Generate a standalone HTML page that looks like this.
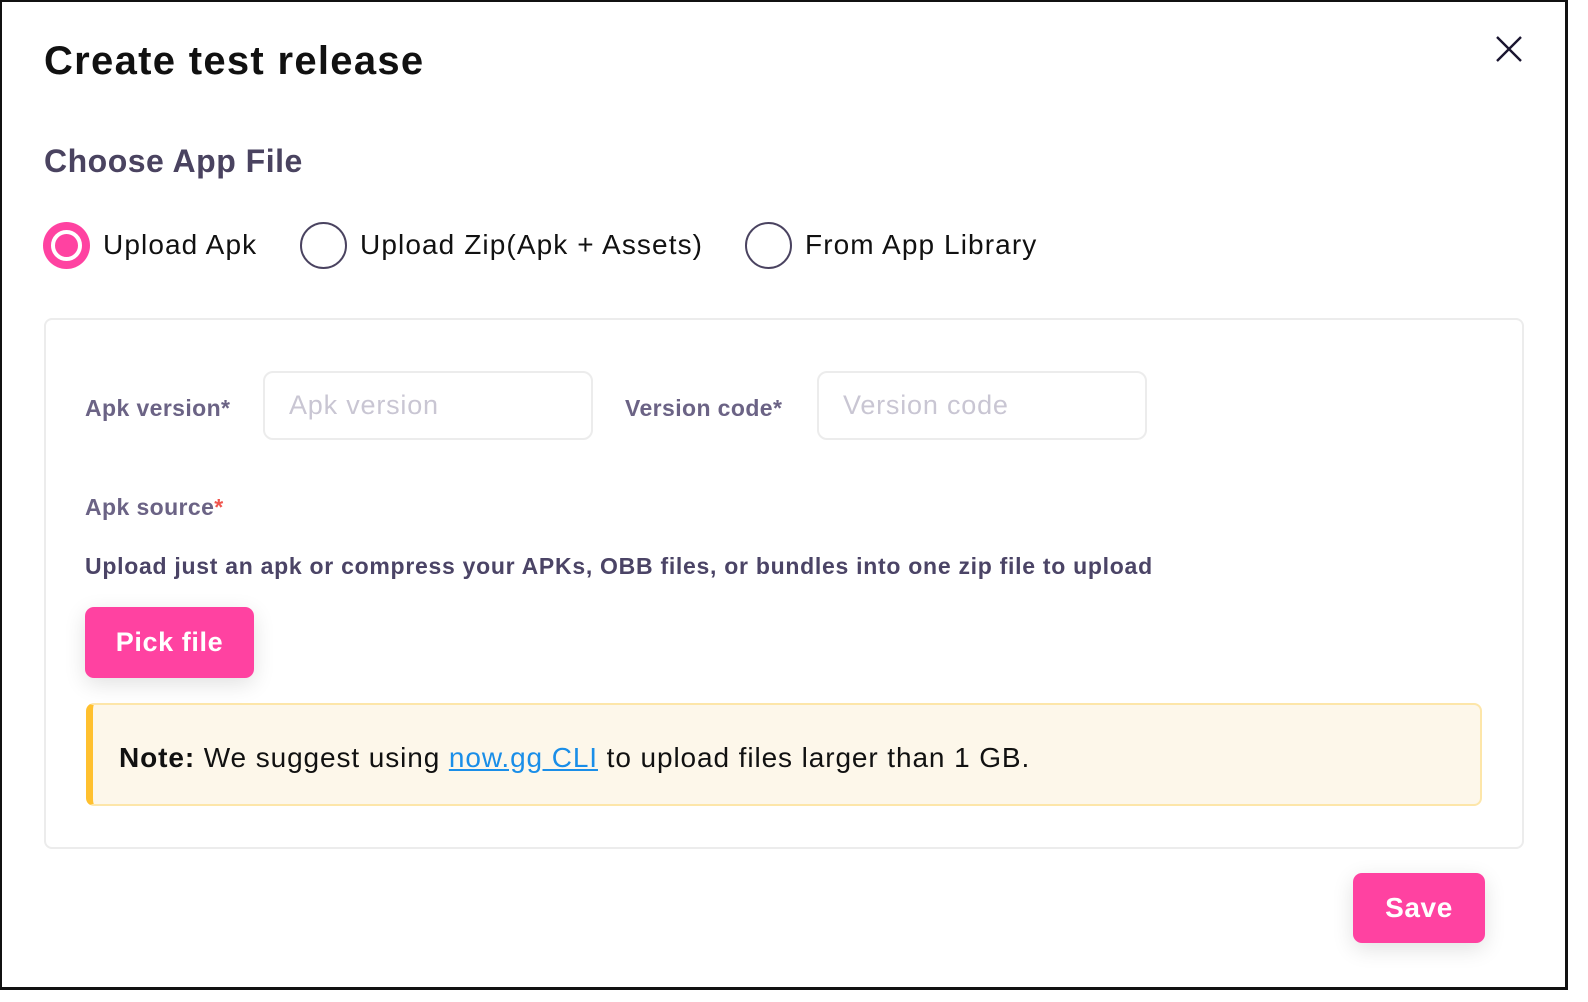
<!DOCTYPE html>
<html><head><meta charset="utf-8"><style>
*{box-sizing:border-box;margin:0;padding:0}
body{width:1588px;height:1002px;background:#fff;font-family:"Liberation Sans",sans-serif;position:relative;overflow:hidden}
.frame{position:absolute;left:0;top:0;width:1568px;height:990px;border:2px solid #111;border-right-width:3px;border-bottom-width:3px}
.a{position:absolute;white-space:nowrap}
.radio{position:absolute;width:47px;height:47px;border-radius:50%;border:2px solid #4a4360}
.radio.on{border:0;background:#ff42a1}
.radio.on::after{content:"";position:absolute;left:8px;top:8px;width:31px;height:31px;border-radius:50%;border:4px solid #fff;box-sizing:border-box}
.rl{font-size:28px;color:#111;top:229px;letter-spacing:1.1px}
.card{position:absolute;left:44px;top:318px;width:1480px;height:531px;border:2px solid #ececec;border-radius:8px}
.lbl{font-size:23px;font-weight:bold;color:#6b6385;letter-spacing:0.4px}
.inp{position:absolute;height:69px;width:330px;border:2px solid #ececec;border-radius:10px;top:371px;font-size:27px;color:#c9c6d3;padding:17px 0 0 24px;letter-spacing:0.8px}
.btn{position:absolute;background:#ff42a1;color:#fff;font-weight:bold;border-radius:9px;text-align:center;box-shadow:0 6px 22px rgba(0,0,0,.12);letter-spacing:0.6px}
</style></head><body>
<div class="frame"></div>
<div class="a" style="left:44px;top:39px;font-size:40px;font-weight:bold;color:#111;letter-spacing:1.3px">Create test release</div>
<svg class="a" style="left:1494px;top:34px" width="30" height="30" viewBox="0 0 30 30"><path d="M3 3L27 27M27 3L3 27" stroke="#1a1530" stroke-width="2.4"/></svg>
<div class="a" style="left:44px;top:143px;font-size:32px;font-weight:bold;color:#4a4360;letter-spacing:0.5px">Choose App File</div>
<div class="radio on" style="left:43px;top:222px"></div>
<div class="a rl" style="left:103px">Upload Apk</div>
<div class="radio" style="left:300px;top:222px"></div>
<div class="a rl" style="left:360px">Upload Zip(Apk + Assets)</div>
<div class="radio" style="left:745px;top:222px"></div>
<div class="a rl" style="left:805px">From App Library</div>
<div class="card"></div>
<div class="a lbl" style="left:85px;top:395px">Apk version*</div>
<div class="inp" style="left:263px">Apk version</div>
<div class="a lbl" style="left:625px;top:395px">Version code*</div>
<div class="inp" style="left:817px">Version code</div>
<div class="a lbl" style="left:85px;top:494px">Apk source<span style="color:#f0554e">*</span></div>
<div class="a" style="left:85px;top:553px;font-size:23px;font-weight:bold;color:#4b4466;letter-spacing:0.72px">Upload just an apk or compress your APKs, OBB files, or bundles into one zip file to upload</div>
<div class="btn" style="left:85px;top:607px;width:169px;height:71px;font-size:27px;line-height:71px">Pick file</div>
<div class="a" style="left:86px;top:703px;width:1396px;height:103px;background:#fdf7ea;border:2px solid #fde6a9;border-left:7px solid #ffc02e;border-radius:8px;font-size:28px;color:#111;padding:37px 0 0 26px;letter-spacing:0.9px">
<b>Note:</b> We suggest using <span style="color:#1a8ee8;text-decoration:underline">now.gg CLI</span> to upload files larger than 1 GB.</div>
<div class="btn" style="left:1353px;top:873px;width:132px;height:70px;font-size:28px;line-height:70px">Save</div>
</body></html>
